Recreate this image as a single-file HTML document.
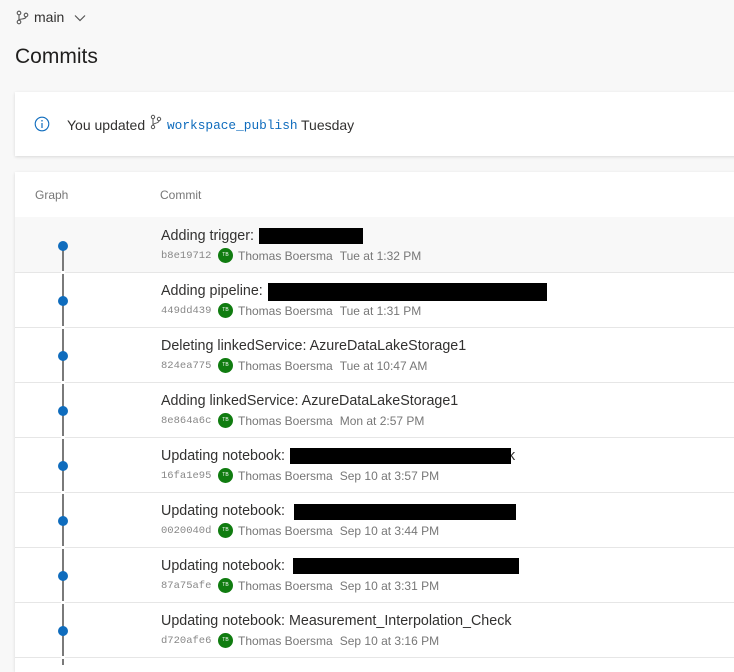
<!DOCTYPE html>
<html><head><meta charset="utf-8"><style>
*{margin:0;padding:0;box-sizing:border-box}
body{width:734px;height:660px;overflow:hidden;background:#f8f8f8;font-family:"Segoe UI","Liberation Sans",sans-serif;color:#323130;position:relative}
.a{position:absolute;white-space:nowrap}
.card{position:absolute;left:15px;right:-10px;background:#fff;box-shadow:0 1px 3px rgba(0,0,0,.13)}
.sep{position:absolute;left:15px;right:0;height:1px;background:#e6e6e6}
.t{font-size:14.3px;color:#323130}
.m{font-size:12px;color:#777}
.h{font-family:"Liberation Mono",monospace;font-size:10.5px;color:#888}
.av{position:absolute;width:15px;height:15px;border-radius:50%;background:#107c10;color:#fff;font-size:5px;text-align:center;line-height:15px}
.dot{position:absolute;left:58px;width:10px;height:10px;border-radius:50%;background:#0f6cbd}
.blk{position:absolute;background:#000}
</style></head><body>
<svg class="a" style="left:16px;top:10px" width="14" height="15" viewBox="0 0 14 15" fill="none" stroke="#555" stroke-width="1.1"><circle cx="3" cy="3" r="1.8"/><circle cx="3" cy="12" r="1.8"/><circle cx="10" cy="5" r="1.8"/><path d="M3 4.8v5.4M10 6.8c0 3-7 1.5-7 3.5"/></svg>
<div class="a" style="left:34px;top:9px;font-size:14px">main</div>
<svg class="a" style="left:74px;top:14px" width="12" height="8"><path d="M1 1.5l5 5 5-5" stroke="#555" fill="none" stroke-width="1.2"/></svg>
<div class="a" style="left:15px;top:45px;font-size:21px;color:#201f1e">Commits</div>

<div class="card" style="top:92px;height:64px"></div>
<svg class="a" style="left:34px;top:116px" width="16" height="16"><circle cx="8" cy="8" r="6.8" stroke="#0f6cbd" fill="none" stroke-width="1.1"/><path d="M8 7v5" stroke="#0f6cbd" stroke-width="1.2"/><circle cx="8" cy="4.8" r=".8" fill="#0f6cbd"/></svg>
<div class="a" style="left:67px;top:117px;font-size:14px">You updated</div>
<svg class="a" style="left:150px;top:114px" width="12" height="16" viewBox="0 0 12 16" fill="none" stroke="#555" stroke-width="1"><circle cx="3" cy="3" r="1.7"/><circle cx="3" cy="13" r="1.7"/><circle cx="9" cy="5" r="1.7"/><path d="M3 4.7v6.6M9 6.7c0 3-6 2-6 4.5"/></svg>
<div class="a" style="left:167px;top:118px;font-size:12.8px;font-family:'Liberation Mono',monospace;color:#0f6cbd">workspace_publish</div>
<div class="a" style="left:301px;top:117px;font-size:14px">Tuesday</div>

<div class="card" style="top:172px;height:500px"></div>
<div class="a" style="left:35px;top:188px;font-size:12px;color:#777">Graph</div>
<div class="a" style="left:160px;top:188px;font-size:12px;color:#777">Commit</div>
<div class="a" style="left:15px;right:0;top:217px;height:55px;background:#f8f8f8"></div>
<div class="a" style="left:62px;top:245px;width:2px;height:420px;background:#7a7a7a"></div>

<div id="rows"></div>
<script>
var R=[["Adding trigger:","b8e19712","Tue at 1:32 PM",[259,228,104,16]],
["Adding pipeline:","449dd439","Tue at 1:31 PM",[268,283,279,18]],
["Deleting linkedService: AzureDataLakeStorage1","824ea775","Tue at 10:47 AM",null],
["Adding linkedService: AzureDataLakeStorage1","8e864a6c","Mon at 2:57 PM",null],
["Updating notebook:","16fa1e95","Sep 10 at 3:57 PM",[290,448,221,16],"k"],
["Updating notebook:","0020040d","Sep 10 at 3:44 PM",[294,504,222,16]],
["Updating notebook:","87a75afe","Sep 10 at 3:31 PM",[293,558,226,16]],
["Updating notebook: Measurement_Interpolation_Check","d720afe6","Sep 10 at 3:16 PM",null]];
var h="";
R.forEach(function(r,i){var y=217+55*i;
h+='<div class="sep" style="top:'+(y+55)+'px"></div>';
h+='<div class="a" style="left:61px;top:'+(y+54)+'px;width:4px;height:3px;background:#fff"></div>';
h+='<div class="dot" style="top:'+(y+24)+'px"></div>';
h+='<div class="a t" style="left:161px;top:'+(y+11)+'px">'+r[0]+'</div>';
if(r[4])h+='<div class="a t" style="left:508px;top:'+(y+11)+'px">'+r[4]+'</div>';
if(r[3])h+='<div class="blk" style="left:'+r[3][0]+'px;top:'+r[3][1]+'px;width:'+r[3][2]+'px;height:'+r[3][3]+'px"></div>';
h+='<div class="a h" style="left:161px;top:'+(y+33)+'px">'+r[1]+'</div>';
h+='<div class="av" style="left:218px;top:'+(y+31)+'px">TB</div>';
h+='<div class="a m" style="left:238px;top:'+(y+32)+'px">Thomas Boersma<span style="margin-left:7px">'+r[2]+'</span></div>';});
document.getElementById("rows").innerHTML=h;
</script>
</body></html>
